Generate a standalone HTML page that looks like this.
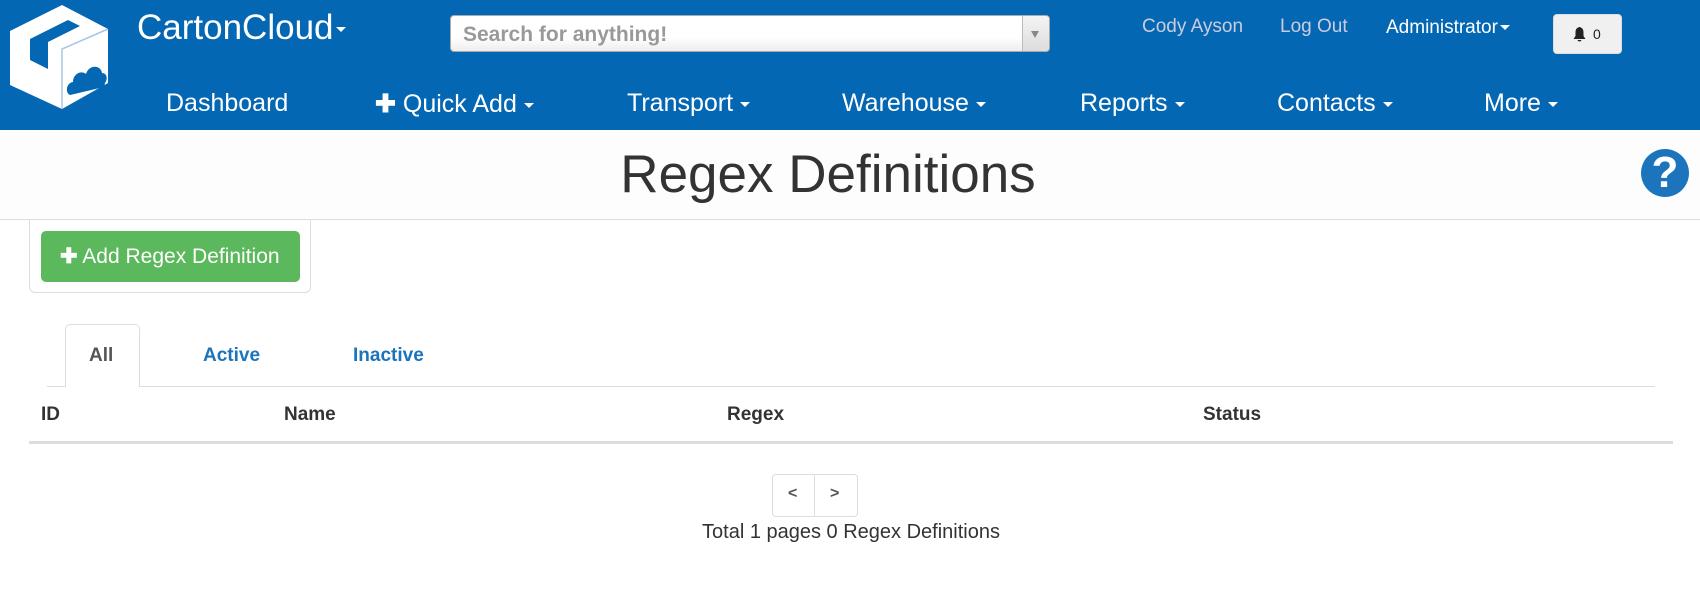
<!DOCTYPE html>
<html><head><style>
*{margin:0;padding:0;box-sizing:border-box}
body{width:1700px;height:598px;background:#fff;font-family:"Liberation Sans",sans-serif;position:relative;overflow:hidden;color:#333}
.a{position:absolute;white-space:nowrap}
#hdr{position:absolute;left:0;top:0;width:1700px;height:130px;background:#0467b3}
.nav{color:#fff;font-size:25px;top:89px}
.caret{display:inline-block;width:0;height:0;border-left:5px solid transparent;border-right:5px solid transparent;border-top:5px solid currentColor;vertical-align:middle;margin-left:7px}
</style></head><body>
<div id="hdr"></div>
<svg class="a" style="left:8px;top:3px" width="112" height="106" viewBox="0 0 112 106">
<polygon points="2,28 54,2 100,26 100,80 54,106 2,82" fill="#fff"/>
<polygon points="22,36 60,17 72,23 40,39 40,66 22,57" fill="#0467b3"/>
<polyline points="54,106 54,46 100,26" fill="none" stroke="#a9c6e3" stroke-width="1.5"/>
<path d="M62 92 C57 90 58 80 65 79 C65 71 73 67 78 71 C81 61 93 62 94 70 C99 70 100 76 97 80 L96 84 Z" fill="#0467b3"/>
</svg>
<div class="a" style="left:137px;top:8px;font-size:35px;color:#fff">CartonCloud<span class="caret" style="margin-left:2px"></span></div>
<div class="a" style="left:450px;top:15px;width:600px;height:37px;border-radius:4px;background:linear-gradient(#fff 60%,#eee);border:1px solid #aaa"></div>
<div class="a" style="left:463px;top:23px;font-size:21px;font-weight:bold;color:#999">Search for anything!</div>
<div class="a" style="left:1022px;top:16px;width:27px;height:35px;border-left:1px solid #bbb;background:linear-gradient(#f4f4f4,#ddd);border-radius:0 4px 4px 0"></div>
<div class="a" style="left:1031px;top:31px;border-left:4px solid transparent;border-right:4px solid transparent;border-top:7px solid #888"></div>
<div class="a" style="left:1142px;top:16px;font-size:19px;color:#ccd">Cody Ayson</div>
<div class="a" style="left:1280px;top:16px;font-size:19px;color:#ccd">Log Out</div>
<div class="a" style="left:1386px;top:17px;font-size:19px;color:#fff">Administrator<span class="caret" style="margin-left:2px"></span></div>
<div class="a" style="left:1553px;top:14px;width:69px;height:40px;background:#f0f0f0;border-radius:4px;border:1px solid #ddd"></div>
<svg class="a" style="left:1573px;top:27px" width="13" height="15" viewBox="0 0 13 15"><path d="M6.5 0 C3 1 2.5 3 2.5 6 L2.5 9 L0.5 12 L12.5 12 L10.5 9 L10.5 6 C10.5 3 10 1 6.5 0 Z M4.5 13 L8.5 13 C8 15 5 15 4.5 13 Z" fill="#222"/></svg>
<div class="a" style="left:1593px;top:26px;font-size:14px;color:#222">0</div>
<div class="a nav" style="left:166px">Dashboard</div>
<div class="a nav" style="left:375px"><b>✚</b> Quick Add<span class="caret"></span></div>
<div class="a nav" style="left:627px">Transport<span class="caret"></span></div>
<div class="a nav" style="left:842px">Warehouse<span class="caret"></span></div>
<div class="a nav" style="left:1080px">Reports<span class="caret"></span></div>
<div class="a nav" style="left:1277px">Contacts<span class="caret"></span></div>
<div class="a nav" style="left:1484px">More<span class="caret"></span></div>
<div class="a" style="left:0;top:130px;width:1700px;height:90px;background:#fdfdfd;border-bottom:1px solid #ddd"></div>
<div class="a" style="left:0;width:1656px;text-align:center;top:144px;font-size:53px;color:#333">Regex Definitions</div>
<div class="a" style="left:1641px;top:149px;width:48px;height:48px;border-radius:50%;background:#1c75bc;color:#fff;font-weight:bold;font-size:44px;text-align:center;line-height:48px">?</div>
<div class="a" style="left:29px;top:219px;width:282px;height:74px;border:1px solid #ddd;border-top:none;border-radius:0 0 6px 6px"></div>
<div class="a" style="left:41px;top:231px;width:259px;height:51px;background:#5cb85c;border-radius:5px;color:#fff;font-size:21px;line-height:51px;padding-left:19px"><b>✚</b> Add Regex Definition</div>
<div class="a" style="left:47px;top:386px;width:1608px;height:1px;background:#ddd"></div>
<div class="a" style="left:65px;top:324px;width:75px;height:63px;border:1px solid #ddd;border-bottom:none;border-radius:5px 5px 0 0;background:#fff"></div>
<div class="a" style="left:89px;top:345px;font-size:19px;font-weight:bold;color:#555">All</div>
<div class="a" style="left:203px;top:345px;font-size:19px;font-weight:bold;color:#1c75bc">Active</div>
<div class="a" style="left:353px;top:345px;font-size:19px;font-weight:bold;color:#1c75bc">Inactive</div>
<div class="a" style="left:41px;top:404px;font-size:19px;font-weight:bold">ID</div>
<div class="a" style="left:284px;top:404px;font-size:19px;font-weight:bold">Name</div>
<div class="a" style="left:727px;top:404px;font-size:19px;font-weight:bold">Regex</div>
<div class="a" style="left:1203px;top:404px;font-size:19px;font-weight:bold">Status</div>
<div class="a" style="left:29px;top:441px;width:1644px;height:3px;background:#ddd"></div>
<div class="a" style="left:772px;top:474px;width:86px;height:43px;border:1px solid #ddd;border-radius:4px"></div>
<div class="a" style="left:814px;top:474px;width:1px;height:43px;background:#ddd"></div>
<div class="a" style="left:788px;top:485px;font-size:16px;font-weight:bold;color:#555">&lt;</div>
<div class="a" style="left:830px;top:485px;font-size:16px;font-weight:bold;color:#555">&gt;</div>
<div class="a" style="left:0;width:1702px;text-align:center;top:521px;font-size:20px;color:#333">Total 1 pages 0 Regex Definitions</div>
</body></html>
